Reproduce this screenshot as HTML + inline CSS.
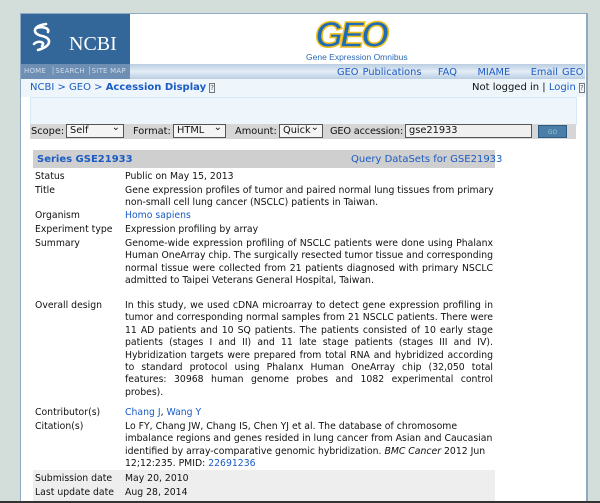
<!DOCTYPE html>
<html><head><style>
body{margin:0;width:600px;height:503px;background:#d3ddda;font-family:"DejaVu Sans",Verdana,sans-serif;font-size:9.3px;color:#111;overflow:hidden;position:relative}
.a{position:absolute}
a,.lk{color:#1a5bc4;text-decoration:none}
.page{position:absolute;left:20px;top:13px;width:565px;height:488px;background:#fff;border-left:1px solid #8fa9c4;border-right:2px solid #8fa9c4;border-top:1px solid #8fa9c4}
.lab{position:absolute;left:35px}
.val{position:absolute;left:125px;width:368px;line-height:12.4px;white-space:nowrap}
.j div{text-align:justify;text-align-last:justify;white-space:normal}
.j div:last-child{text-align-last:left}
.sel{position:absolute;top:124px;height:14px;border:1px solid #555;background:#f4f4f4;box-sizing:border-box;padding-left:3px;line-height:12px;font-size:9.8px}
.dd:after{content:"⌄";position:absolute;right:3px;top:-3px;font-size:10px}
</style></head><body>
<div class="page"></div>
<div class="a" style="left:21px;top:14px;width:109px;height:50px;background:#336699"></div>
<svg class="a" style="left:28px;top:22px" width="30" height="32" viewBox="0 0 30 32"><path d="M18 2 C4 4 4 12 14 14 C24 16 24 24 10 28 M8 6 C14 4 22 6 20 10 M6 22 C10 18 18 20 14 24" stroke="#fff" stroke-width="2.6" fill="none" stroke-linecap="round"/></svg>
<div class="a" style="left:69px;top:33px;color:#fff;font-family:'Liberation Serif',serif;font-size:20px">NCBI</div>
<div class="a" style="left:21px;top:64px;width:564px;height:15px;background:linear-gradient(#b9cde2,#e4edf6 50%,#b9cde2)"></div>
<div class="a" style="left:21px;top:64px;width:109px;height:15px;background:#6e8fb3"></div>
<div class="a" style="left:24px;top:67px;color:#d0dcea;font-size:7px;letter-spacing:.2px">HOME&nbsp;&nbsp;│SEARCH&nbsp;│SITE MAP</div>
<div class="a" style="left:337px;top:67px;color:#1a5bc4;font-size:9.8px;word-spacing:1px">GEO Publications&nbsp;&nbsp;&nbsp;&nbsp;FAQ&nbsp;&nbsp;&nbsp;&nbsp;&nbsp;MIAME&nbsp;&nbsp;&nbsp;&nbsp;&nbsp;Email GEO</div>
<div class="a" style="left:315px;top:14px;font-family:'Liberation Sans',sans-serif;font-weight:bold;font-style:italic;font-size:36px;color:#1f6bb5;letter-spacing:-3px;-webkit-text-stroke:1.5px #f0c020">GEO</div>
<div class="a" style="left:306px;top:52px;color:#2a6ab5;font-family:'Liberation Sans',sans-serif;font-size:8.5px">Gene Expression Omnibus</div>
<div class="a" style="left:21px;top:79px;width:564px;height:18px;background:#eef6fc"></div>
<div class="a" style="left:30px;top:82px;font-size:10px"><span class="lk">NCBI &gt; GEO &gt; </span><b class="lk">Accession Display</b> <span style="border:1px solid #777;font-size:7px;color:#555">?</span></div>
<div class="a" style="left:472px;top:82px;font-size:10px">Not logged in | <span class="lk">Login</span> <span style="border:1px solid #777;font-size:7px;color:#555">?</span></div>
<div class="a" style="left:30px;top:97px;width:545px;height:26px;background:#eef6fc;border:1px solid #d7eaf4"></div>
<div class="a" style="left:30px;top:124px;width:546px;height:15px;background:#d6d6d6"></div>
<div class="a" style="left:31px;top:126px;font-size:9.8px">Scope:</div>
<div class="sel dd" style="left:66px;width:58px">Self</div>
<div class="a" style="left:133px;top:126px;font-size:9.8px">Format:</div>
<div class="sel dd" style="left:173px;width:53px">HTML</div>
<div class="a" style="left:235px;top:126px;font-size:9.8px">Amount:</div>
<div class="sel dd" style="left:279px;width:44px">Quick</div>
<div class="a" style="left:330px;top:126px;font-size:9.8px;letter-spacing:-0.2px">GEO accession:</div>
<div class="sel" style="left:405px;width:127px;background:#f0f0f0">gse21933</div>
<div class="a" style="left:538px;top:125px;width:29px;height:13px;background:#4a7ea8;border:1px solid #2c5a80;color:#9cc;font-size:6px;text-align:center;line-height:13px;box-sizing:border-box">GO</div>
<div class="a" style="left:33px;top:150px;width:462px;height:18px;background:#cfcfcf"></div>
<div class="a" style="left:37px;top:154px;font-size:10px;font-weight:bold;color:#1a5bc4">Series GSE21933</div>
<div class="a lk" style="left:351px;top:154px;font-size:10px">Query DataSets for GSE21933</div>
<div class="a" style="left:33px;top:470px;width:462px;height:31px;background:#eeeeee"></div>

<div class="lab" style="top:171px">Status</div><div class="val" style="top:171px">Public on May 15, 2013</div>
<div class="lab" style="top:185px">Title</div><div class="val" style="top:185px">Gene expression profiles of tumor and paired normal lung tissues from primary<br>non-small cell lung cancer (NSCLC) patients in Taiwan.</div>
<div class="lab" style="top:210px">Organism</div><div class="val lk" style="top:210px">Homo sapiens</div>
<div class="lab" style="top:224px">Experiment type</div><div class="val" style="top:224px">Expression profiling by array</div>
<div class="lab" style="top:238px">Summary</div><div class="val j" style="top:238px"><div>Genome-wide expression profiling of NSCLC patients were done using Phalanx</div><div>Human OneArray chip. The surgically resected tumor tissue and corresponding</div><div>normal tissue were collected from 21 patients diagnosed with primary NSCLC</div><div>admitted to Taipei Veterans General Hospital, Taiwan.</div></div>
<div class="lab" style="top:300px">Overall design</div><div class="val j" style="top:300px"><div>In this study, we used cDNA microarray to detect gene expression profiling in</div><div>tumor and corresponding normal samples from 21 NSCLC patients. There were</div><div>11 AD patients and 10 SQ patients. The patients consisted of 10 early stage</div><div>patients (stages I and II) and 11 late stage patients (stages III and IV).</div><div>Hybridization targets were prepared from total RNA and hybridized according</div><div>to standard protocol using Phalanx Human OneArray chip (32,050 total</div><div>features: 30968 human genome probes and 1082 experimental control</div><div>probes).</div></div>
<div class="lab" style="top:407px">Contributor(s)</div><div class="val" style="top:407px"><span class="lk">Chang J</span>, <span class="lk">Wang Y</span></div>
<div class="lab" style="top:421px">Citation(s)</div><div class="val" style="top:421px">Lo FY, Chang JW, Chang IS, Chen YJ et al. The database of chromosome<br>imbalance regions and genes resided in lung cancer from Asian and Caucasian<br>identified by array-comparative genomic hybridization. <i>BMC Cancer</i> 2012 Jun<br>12;12:235. PMID: <span class="lk">22691236</span></div>
<div class="lab" style="top:473px">Submission date</div><div class="val" style="top:473px">May 20, 2010</div>
<div class="lab" style="top:487px">Last update date</div><div class="val" style="top:487px">Aug 28, 2014</div>
<div class="a" style="left:0;top:501px;width:600px;height:2px;background:#333"></div>
</body></html>
